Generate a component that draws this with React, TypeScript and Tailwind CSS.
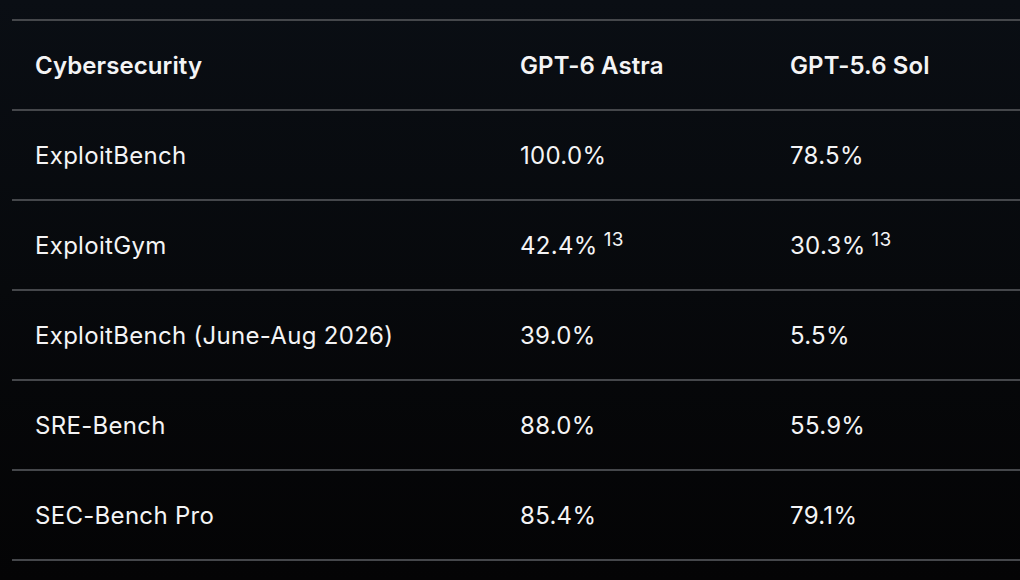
const ROWS: { name: string; a: string; b: string; note?: string }[] = [
  { name: "ExploitBench", a: "100.0%", b: "78.5%" },
  { name: "ExploitGym", a: "42.4%", b: "30.3%", note: "13" },
  { name: "ExploitBench (June-Aug 2026)", a: "39.0%", b: "5.5%" },
  { name: "SRE-Bench", a: "88.0%", b: "55.9%" },
  { name: "SEC-Bench Pro", a: "85.4%", b: "79.1%" },
];

function Cell({ value, note }: { value: string; note?: string }) {
  return (
    <div>
      {value}
      {note && <span className="ml-[6px] text-[19px] relative -top-[8px]">{note}</span>}
    </div>
  );
}

export default function App() {
  return (
    <div
      className="w-[1020px] h-[580px] overflow-hidden bg-gradient-to-b from-[#0a0e14] via-[#07090c] to-[#040405] pt-[19px] pl-[12px] text-[#f4f4f5]"
      style={{ fontFamily: "Inter, 'Liberation Sans', sans-serif" }}
    >
      <div className="border-t-2 border-[#45474b]">
        <div className="grid grid-cols-[485px_270px_1fr] items-center h-[90px] pl-[23px] pt-[2px] border-b-2 border-[#45474b] text-[24px] font-semibold tracking-[0.1px]">
          <div>Cybersecurity</div>
          <div>GPT-6 Astra</div>
          <div>GPT-5.6 Sol</div>
        </div>
        {ROWS.map((r) => (
          <div
            key={r.name}
            className="grid grid-cols-[485px_270px_1fr] items-center h-[90px] pl-[23px] pt-[2px] border-b-2 border-[#45474b] text-[24px] tracking-[0.3px]"
          >
            <div>{r.name}</div>
            <Cell value={r.a} note={r.note} />
            <Cell value={r.b} note={r.note} />
          </div>
        ))}
      </div>
    </div>
  );
}
